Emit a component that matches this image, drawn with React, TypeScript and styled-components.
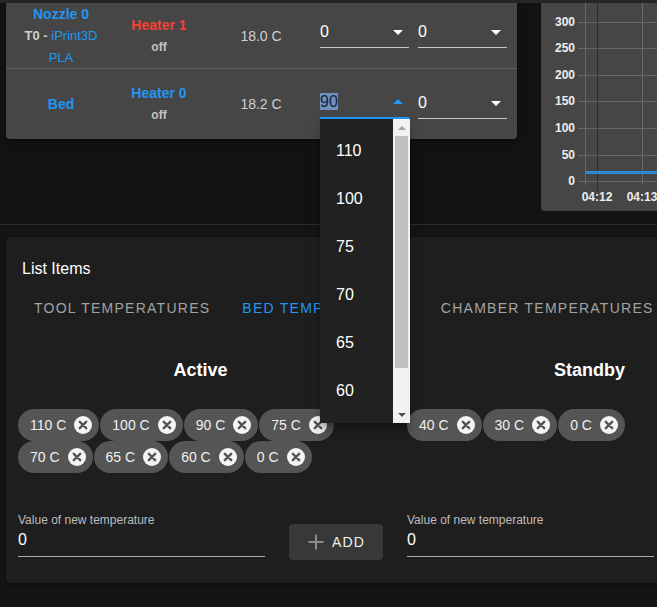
import React from "react";
import styled, { createGlobalStyle } from "styled-components";

const GlobalStyle = createGlobalStyle`
  html, body {
    margin: 0;
    padding: 0;
    background: #121212;
  }
  body {
    font-family: "Liberation Sans", Arial, sans-serif;
    overflow: hidden;
  }
`;

const Page = styled.div`
  position: relative;
  width: 657px;
  height: 607px;
  overflow: hidden;
  background: #121212;
`;

const TopStrip = styled.div`
  height: 3px;
  background: #262626;
`;

const TopRow = styled.div`
  display: flex;
  align-items: flex-start;
  gap: 24px;
  padding-left: 6px;
`;

const HeaterCard = styled.div`
  width: 511px;
  flex: none;
  background: #464646;
  border-radius: 0 0 4px 4px;
  box-shadow: 0 2px 4px rgba(0, 0, 0, 0.35);
`;

const HeaterRow = styled.div<{ $first?: boolean }>`
  display: grid;
  grid-template-columns: 110px 86px 118px 98px 99px;
  box-sizing: border-box;
  height: ${(p) => (p.$first ? "66px" : "70px")};
  padding-bottom: ${(p) => (p.$first ? "3px" : "0")};
  border-bottom: ${(p) => (p.$first ? "1px solid #5c5c5c" : "none")};
`;

const Cell = styled.div`
  display: flex;
  flex-direction: column;
  align-items: center;
  justify-content: center;
  text-align: center;
`;

const ToolName = styled.div<{ $color?: string }>`
  font-size: 14px;
  font-weight: bold;
  line-height: 22px;
  color: ${(p) => p.$color || "#2196f3"};
`;

const ToolLine = styled.div`
  font-size: 13px;
  line-height: 22px;
  color: #2196f3;
  white-space: nowrap;

  b {
    color: #cfcfcf;
  }
`;

const StateText = styled.div`
  font-size: 12px;
  font-weight: bold;
  line-height: 22px;
  color: #c4c4c4;
`;

const TempText = styled.div`
  font-size: 14px;
  color: #d0d0d0;
`;

const SelectCell = styled.div`
  display: flex;
  align-items: center;
`;

const Select = styled.div<{ $active?: boolean; $lift: number }>`
  position: relative;
  width: 89px;
  height: 32px;
  margin-bottom: ${(p) => p.$lift}px;
  box-sizing: border-box;
  display: flex;
  align-items: center;
  justify-content: space-between;
  border-bottom: ${(p) => (p.$active ? "2px solid #2196f3" : "1px solid #c8c8c8")};
`;

const SelectValue = styled.span`
  font-size: 16px;
  line-height: 20px;
  color: #ffffff;
`;

const Highlight = styled.span`
  background: #7091bf;
  color: #15253a;
`;

const Caret = styled.svg<{ $up?: boolean }>`
  width: 24px;
  height: 24px;
  margin-right: -1px;
  fill: ${(p) => (p.$up ? "#2196f3" : "#ffffff")};
  transform: ${(p) => (p.$up ? "rotate(180deg)" : "none")};
`;

const Menu = styled.div`
  position: absolute;
  top: calc(100% + 2px);
  left: 0;
  z-index: 10;
  width: 90px;
  height: 304px;
  display: flex;
  background: #212121;
  overflow: hidden;
  box-shadow: 0 5px 5px -3px rgba(0, 0, 0, 0.3), 0 8px 10px 1px rgba(0, 0, 0, 0.2);
`;

const MenuList = styled.div`
  flex: 1;
  padding-top: 8px;
  overflow: hidden;
`;

const MenuItem = styled.div`
  height: 48px;
  padding-left: 16px;
  display: flex;
  align-items: center;
  font-size: 16px;
  color: #ffffff;
`;

const ScrollTrack = styled.div`
  width: 17px;
  flex: none;
  display: flex;
  flex-direction: column;
  background: #f1f1f1;
`;

const ScrollArrow = styled.div<{ $down?: boolean }>`
  height: 17px;
  display: flex;
  align-items: center;
  justify-content: center;

  &::before {
    content: "";
    border-left: 4px solid transparent;
    border-right: 4px solid transparent;
    ${(p) =>
      p.$down
        ? "border-top: 4px solid #505050;"
        : "border-bottom: 4px solid #a3a3a3;"}
  }
`;

const ScrollSpace = styled.div`
  flex: 1;
`;

const ScrollThumb = styled.div`
  height: 232px;
  margin: 0 2px;
  background: #c1c1c1;
`;

const ChartCard = styled.div`
  width: 130px;
  height: 208px;
  flex: none;
  background: #464646;
  border-radius: 0 0 0 4px;
  overflow: hidden;
`;

const Divider = styled.div`
  height: 1px;
  margin-top: 13px;
  background: #2a2a2a;
`;

const LowerSection = styled.div`
  padding: 12px 0 0 6px;
  background: #141414;
  height: 400px;
`;

const ListCard = styled.div`
  width: 778px;
  background: #1e1e1e;
  border-radius: 4px;
  padding-bottom: 23px;
  box-shadow: 0 2px 4px rgba(0, 0, 0, 0.4);
`;

const CardTitle = styled.div`
  padding: 16px 16px 0;
  font-size: 16px;
  line-height: 32px;
  color: #ffffff;
`;

const Tabs = styled.div`
  display: flex;
  height: 48px;
  margin-top: -1px;
  padding-left: 12px;
`;

const Tab = styled.div<{ $active?: boolean }>`
  padding: 0 16px;
  display: flex;
  align-items: center;
  font-size: 14px;
  letter-spacing: 1.25px;
  text-transform: uppercase;
  white-space: nowrap;
  color: ${(p) => (p.$active ? "#2196f3" : "#a3a3a3")};
`;

const Columns = styled.div`
  display: grid;
  grid-template-columns: 365px 365px;
  column-gap: 24px;
  padding: 12px 12px 0;
`;

const Column = styled.div`
  display: flex;
  flex-direction: column;
`;

const ColumnHeading = styled.div`
  margin-top: 14px;
  font-size: 18px;
  font-weight: bold;
  line-height: 24px;
  text-align: center;
  color: #ffffff;
`;

const ChipWrap = styled.div`
  display: flex;
  flex-wrap: wrap;
  column-gap: 1px;
  margin-top: 27px;
  min-height: 64px;
  align-content: flex-start;
`;

const Chip = styled.span`
  height: 32px;
  box-sizing: border-box;
  display: inline-flex;
  align-items: center;
  gap: 8px;
  padding: 0 7px 0 12px;
  border-radius: 16px;
  background: #555555;
  font-size: 14px;
  color: #f0f0f0;
`;

const FieldRow = styled.div`
  display: flex;
  align-items: flex-start;
  gap: 24px;
  margin-top: 39px;
`;

const Field = styled.div`
  flex: 1;
`;

const FieldLabel = styled.div`
  font-size: 12px;
  line-height: 16px;
  color: #bdbdbd;
`;

const FieldInput = styled.div`
  font-size: 16px;
  line-height: 24px;
  padding-bottom: 4px;
  color: #ffffff;
  border-bottom: 1px solid #a8a8a8;
`;

const AddButton = styled.div`
  width: 94px;
  height: 36px;
  margin-top: 12px;
  box-sizing: border-box;
  flex: none;
  display: flex;
  align-items: center;
  gap: 7px;
  padding-left: 18px;
  border-radius: 4px;
  background: #383838;
  font-size: 14px;
  letter-spacing: 1.2px;
  color: #f0f0f0;
`;

const CloseIcon = () => (
  <svg width="18" height="18" viewBox="0 0 18 18">
    <circle cx="9" cy="9" r="9" fill="#f4f4f4" />
    <path d="M5.8 5.8 L12.2 12.2 M12.2 5.8 L5.8 12.2" stroke="#555555" strokeWidth="2.4" strokeLinecap="round" />
  </svg>
);

const CaretIcon = ({ up }: { up?: boolean }) => (
  <Caret $up={up} viewBox="0 0 24 24">
    <path d="M7 10l5 5 5-5H7z" />
  </Caret>
);

const PlusIcon = () => (
  <svg width="18" height="18" viewBox="0 0 18 18">
    <path d="M9 1.5 V16.5 M1.5 9 H16.5" stroke="#8c8c8c" strokeWidth="2" />
  </svg>
);

const Chart = () => {
  const ticks = [
    { v: 300, y: 19 },
    { v: 250, y: 45 },
    { v: 200, y: 72 },
    { v: 150, y: 98 },
    { v: 100, y: 125 },
    { v: 50, y: 152 },
    { v: 0, y: 178 },
  ];
  return (
    <svg width="130" height="208">
      {ticks.map((t) => (
        <line key={t.v} x1="37" x2="130" y1={t.y + 0.5} y2={t.y + 0.5} stroke="#676767" />
      ))}
      <line x1="44.5" x2="44.5" y1="0" y2="182" stroke="#6a6a6a" />
      <line x1="56.5" x2="56.5" y1="0" y2="188" stroke="#2c2c2c" />
      <line x1="101.5" x2="101.5" y1="0" y2="182" stroke="#6a6a6a" />
      <line x1="44" x2="130" y1="169.5" y2="169.5" stroke="#2a8ad8" strokeWidth="3" />
      {ticks.map((t) => (
        <text
          key={"l" + t.v}
          x="34"
          y={t.y + 4}
          textAnchor="end"
          fontSize="12"
          fontWeight="bold"
          fill="#eeeeee"
          fontFamily="Liberation Sans, Arial, sans-serif"
        >
          {t.v}
        </text>
      ))}
      <text x="56" y="198" textAnchor="middle" fontSize="12" fontWeight="bold" fill="#eeeeee" fontFamily="Liberation Sans, Arial, sans-serif">
        04:12
      </text>
      <text x="101" y="198" textAnchor="middle" fontSize="12" fontWeight="bold" fill="#eeeeee" fontFamily="Liberation Sans, Arial, sans-serif">
        04:13
      </text>
    </svg>
  );
};

const menuItems = ["110", "100", "75", "70", "65", "60", "50", "40", "0"];
const activeChips = ["110 C", "100 C", "90 C", "75 C", "70 C", "65 C", "60 C", "0 C"];
const standbyChips = ["40 C", "30 C", "0 C"];

const TempColumn = ({ title, chips }: { title: string; chips: string[] }) => (
  <Column>
    <ColumnHeading>{title}</ColumnHeading>
    <ChipWrap>
      {chips.map((c) => (
        <Chip key={c}>
          {c}
          <CloseIcon />
        </Chip>
      ))}
    </ChipWrap>
    <FieldRow>
      <Field>
        <FieldLabel>Value of new temperature</FieldLabel>
        <FieldInput>0</FieldInput>
      </Field>
      <AddButton>
        <PlusIcon />
        ADD
      </AddButton>
    </FieldRow>
  </Column>
);

export default function App() {
  return (
    <Page>
      <GlobalStyle />
      <TopStrip />
      <TopRow>
        <HeaterCard>
          <HeaterRow $first>
            <Cell>
              <ToolName>Nozzle 0</ToolName>
              <ToolLine>
                <b>T0 -</b> iPrint3D
              </ToolLine>
              <ToolLine>PLA</ToolLine>
            </Cell>
            <Cell>
              <ToolName $color="#f44336">Heater 1</ToolName>
              <StateText>off</StateText>
            </Cell>
            <Cell>
              <TempText>18.0 C</TempText>
            </Cell>
            <SelectCell>
              <Select $lift={8}>
                <SelectValue>0</SelectValue>
                <CaretIcon />
              </Select>
            </SelectCell>
            <SelectCell>
              <Select $lift={8}>
                <SelectValue>0</SelectValue>
                <CaretIcon />
              </Select>
            </SelectCell>
          </HeaterRow>
          <HeaterRow>
            <Cell>
              <ToolName>Bed</ToolName>
            </Cell>
            <Cell>
              <ToolName>Heater 0</ToolName>
              <StateText>off</StateText>
            </Cell>
            <Cell>
              <TempText>18.2 C</TempText>
            </Cell>
            <SelectCell>
              <Select $active $lift={2}>
                <SelectValue>
                  <Highlight>90</Highlight>
                </SelectValue>
                <CaretIcon up />
                <Menu>
                  <MenuList>
                    {menuItems.map((m) => (
                      <MenuItem key={m}>{m}</MenuItem>
                    ))}
                  </MenuList>
                  <ScrollTrack>
                    <ScrollArrow />
                    <ScrollThumb />
                    <ScrollSpace />
                    <ScrollArrow $down />
                  </ScrollTrack>
                </Menu>
              </Select>
            </SelectCell>
            <SelectCell>
              <Select $lift={2}>
                <SelectValue>0</SelectValue>
                <CaretIcon />
              </Select>
            </SelectCell>
          </HeaterRow>
        </HeaterCard>
        <ChartCard>
          <Chart />
        </ChartCard>
      </TopRow>
      <Divider />
      <LowerSection>
        <ListCard>
          <CardTitle>List Items</CardTitle>
          <Tabs>
            <Tab>Tool Temperatures</Tab>
            <Tab $active>Bed Temperatures</Tab>
            <Tab>Chamber Temperatures</Tab>
          </Tabs>
          <Columns>
            <TempColumn title="Active" chips={activeChips} />
            <TempColumn title="Standby" chips={standbyChips} />
          </Columns>
        </ListCard>
      </LowerSection>
    </Page>
  );
}
